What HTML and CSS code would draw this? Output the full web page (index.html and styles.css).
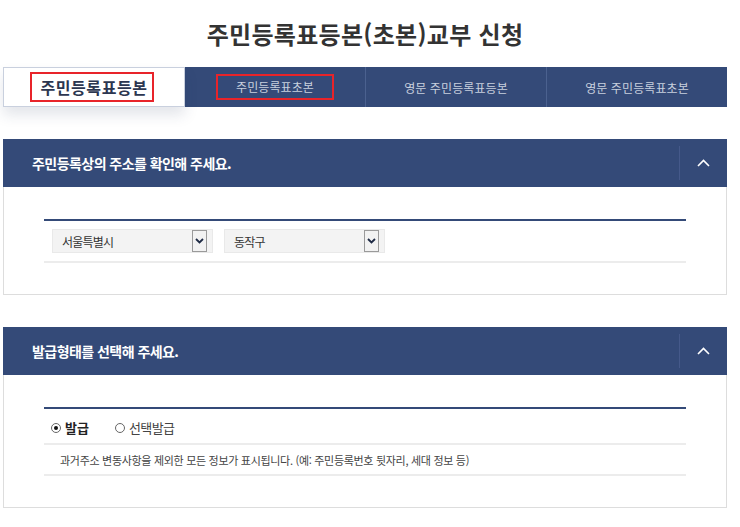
FILE: index.html
```html
<!DOCTYPE html>
<html lang="ko">
<head>
<meta charset="utf-8">
<title>주민등록표등본(초본)교부 신청</title>
<link rel="stylesheet" href="styles.css">
</head>
<body>
<div class="page">
  <h1 class="title">주민등록표등본(초본)교부 신청</h1>

  <ul class="tabs">
    <li class="tab active"><span class="mark mark-main">주민등록표등본</span></li>
    <li class="tab"><span class="mark mark-sub">주민등록표초본</span></li>
    <li class="tab">영문 주민등록표등본</li>
    <li class="tab">영문 주민등록표초본</li>
  </ul>

  <section class="panel">
    <div class="panel-head">
      <h2 class="panel-title">주민등록상의 주소를 확인해 주세요.</h2>
      <button class="toggle" type="button" aria-label="접기">
        <svg width="13" height="8" viewBox="0 0 13 8"><path d="M1 7 L6.5 1.5 L12 7" fill="none" stroke="#ffffff" stroke-width="1.6"/></svg>
      </button>
    </div>
    <div class="panel-body">
      <div class="form-table">
        <div class="row row-select">
          <div class="select">
            <span class="select-text">서울특별시</span>
            <span class="select-btn"><svg width="9" height="6" viewBox="0 0 9 6"><path d="M1 1 L4.5 4.5 L8 1" fill="none" stroke="#1e2a44" stroke-width="1.8"/></svg></span>
          </div>
          <div class="select">
            <span class="select-text">동작구</span>
            <span class="select-btn"><svg width="9" height="6" viewBox="0 0 9 6"><path d="M1 1 L4.5 4.5 L8 1" fill="none" stroke="#1e2a44" stroke-width="1.8"/></svg></span>
          </div>
        </div>
      </div>
    </div>
  </section>

  <section class="panel">
    <div class="panel-head">
      <h2 class="panel-title">발급형태를 선택해 주세요.</h2>
      <button class="toggle" type="button" aria-label="접기">
        <svg width="13" height="8" viewBox="0 0 13 8"><path d="M1 7 L6.5 1.5 L12 7" fill="none" stroke="#ffffff" stroke-width="1.6"/></svg>
      </button>
    </div>
    <div class="panel-body">
      <div class="form-table">
        <div class="row row-radio">
          <label class="radio radio-on"><span class="radio-dot on"></span>발급</label>
          <label class="radio"><span class="radio-dot"></span>선택발급</label>
        </div>
        <div class="row row-desc">과거주소 변동사항을 제외한 모든 정보가 표시됩니다. (예: 주민등록번호 뒷자리, 세대 정보 등)</div>
      </div>
    </div>
  </section>
</div>
</body>
</html>
```

FILE: styles.css
```css
* { box-sizing: border-box; }

body {
  margin: 0;
  background: #ffffff;
  font-family: "Noto Sans CJK KR", "Noto Sans", sans-serif;
  color: #333333;
}

.page {
  width: 724px;
  margin-left: 3px;
}

.title {
  margin: 0;
  height: 67px;
  display: flex;
  align-items: center;
  justify-content: center;
  font-size: 24px;
  font-weight: 700;
  letter-spacing: 0.3px;
  color: #333333;
}

.tabs {
  list-style: none;
  margin: 0;
  padding: 0;
  display: flex;
  height: 40px;
}

.tab {
  flex: 1;
  display: flex;
  align-items: center;
  justify-content: center;
  background: #344a78;
  color: #c8d0de;
  font-size: 12px;
  letter-spacing: 0.1px;
  border-left: 1px solid #4b618f;
}

.tab:nth-child(2) { border-left: none; }

.tab.active {
  background: #ffffff;
  border: 1px solid #c9d0de;
  color: #2c3650;
  font-size: 16px;
  font-weight: 700;
  letter-spacing: 0.6px;
  box-shadow: 0 8px 14px rgba(40, 55, 90, 0.13);
  position: relative;
  z-index: 1;
}

.mark {
  border: 2px solid #e8242a;
}

.mark-main {
  padding: 1px 4px 1px 8px;
  line-height: 24px;
  margin-left: -4px;
}

.mark-sub {
  padding: 2px 18px;
  line-height: 18px;
}

.panel {
  margin-top: 32px;
}

.panel-head {
  height: 48px;
  background: #344a78;
  display: flex;
  align-items: center;
  padding-left: 29px;
}

.panel-title {
  flex: 1;
  margin: 0;
  color: #ffffff;
  font-size: 14px;
  font-weight: 700;
  letter-spacing: -0.55px;
}

.toggle {
  width: 48px;
  height: 34px;
  padding: 0;
  border: 0;
  border-left: 1px solid #45598a;
  background: transparent;
  display: flex;
  align-items: center;
  justify-content: center;
}

.panel-body {
  border: 1px solid #dddddd;
  border-top: 0;
  padding: 32px 40px 31px;
}

.form-table {
  border-top: 2px solid #344a78;
}

.row {
  border-bottom: 2px solid #ececec;
}

.row-select {
  display: flex;
  gap: 11px;
  padding: 8px;
}

.select {
  width: 161px;
  height: 24px;
  background: #f3f3f3;
  border: 1px solid #e9e9e9;
  display: flex;
  align-items: center;
  justify-content: space-between;
  padding-left: 9px;
  padding-right: 5px;
  font-size: 12px;
  letter-spacing: -0.8px;
  color: #333333;
}

.select-btn {
  width: 15px;
  height: 22px;
  border: 1px solid #9a9a9a;
  background: #f2f2f2;
  display: flex;
  align-items: center;
  justify-content: center;
}

.row-radio {
  height: 36px;
  display: flex;
  align-items: center;
  gap: 26px;
  padding: 3px 7px 0;
}

.radio {
  display: flex;
  align-items: center;
  gap: 4px;
  font-size: 13px;
  letter-spacing: -0.6px;
  color: #444444;
}

.radio-on {
  font-weight: 700;
  color: #222222;
  letter-spacing: 0;
}

.radio-dot {
  width: 10px;
  height: 10px;
  border: 1px solid #666666;
  border-radius: 50%;
  display: flex;
  align-items: center;
  justify-content: center;
}

.radio-dot.on::after {
  content: "";
  width: 4px;
  height: 4px;
  border-radius: 50%;
  background: #111111;
}

.row-desc {
  height: 31px;
  display: flex;
  align-items: center;
  padding: 0 16px;
  font-size: 11px;
  letter-spacing: -0.3px;
  color: #444444;
}
```
